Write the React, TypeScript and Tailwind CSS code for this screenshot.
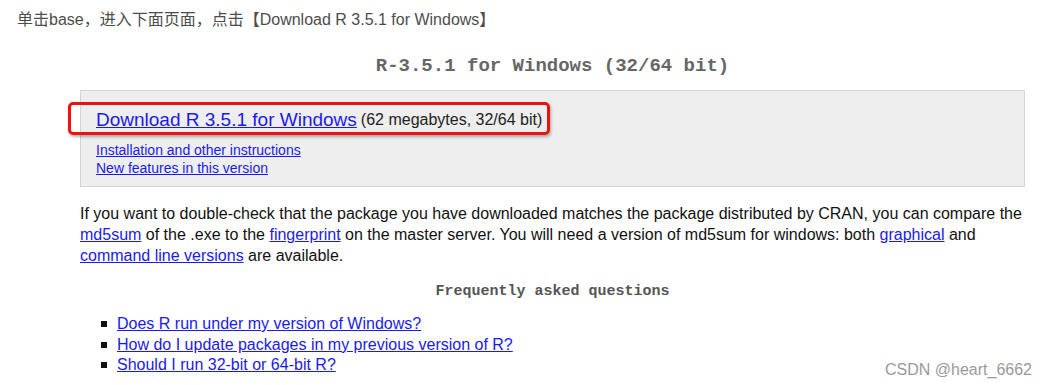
export default function App() {
  const faqs = [
    "Does R run under my version of Windows?",
    "How do I update packages in my previous version of R?",
    "Should I run 32-bit or 64-bit R?",
  ];

  return (
    <div className="relative w-[1044px] h-[385px] overflow-hidden bg-white font-['Liberation_Sans','Noto_Sans_CJK_SC',sans-serif]">
      <p className="pl-[17px] pt-[9px] text-[16px] leading-[22px] text-[#4d4d4d]">
        单击base，进入下面页面，点击【Download R 3.5.1 for Windows】
      </p>

      <div className="ml-[80px] w-[945px]">
        <h2 className="mt-[23px] text-center font-['Liberation_Mono',monospace] font-bold text-[19px] leading-[24px] text-[#666]">
          R-3.5.1 for Windows (32/64 bit)
        </h2>

        <div className="mt-[12px] h-[97px] border border-[#d4d4d4] bg-[#eeeeee] pl-[15px] pt-[11px]">
          <div className="-ml-[28px] inline-flex h-[33px] w-[482px] items-center rounded-[5px] border-[3px] border-[#ee1111] pl-[25px] pt-[3px] shadow-[1px_2px_3px_rgba(0,0,0,0.3)]">
            <a className="text-[19px] text-[#1a1aee] underline">
              Download R 3.5.1 for Windows
            </a>
            <span className="ml-[4px] text-[16px] text-[#222]">
              (62 megabytes, 32/64 bit)
            </span>
          </div>
          <div className="mt-[6px] flex flex-col text-[14px] leading-[18px] text-[#1a1aee]">
            <a className="underline">Installation and other instructions</a>
            <a className="underline">New features in this version</a>
          </div>
        </div>

        <p className="mt-[16px] text-[16px] leading-[21px] text-[#111]">
          If you want to double-check that the package you have downloaded
          matches the package distributed by CRAN, you can compare the
          <br />
          <a className="text-[#1a1aee] underline">md5sum</a> of the .exe to
          the <a className="text-[#1a1aee] underline">fingerprint</a> on the
          master server. You will need a version of md5sum for windows: both{" "}
          <a className="text-[#1a1aee] underline">graphical</a> and
          <br />
          <a className="text-[#1a1aee] underline">command line versions</a> are
          available.
        </p>

        <h3 className="mt-[16px] text-center font-['Liberation_Mono',monospace] font-bold text-[15px] leading-[20px] text-[#555]">
          Frequently asked questions
        </h3>

        <ul className="mt-[12px] pl-[21px] text-[16px] leading-[20.5px]">
          {faqs.map((q) => (
            <li key={q} className="flex items-center">
              <span className="mr-[10px] h-[6px] w-[6px] bg-[#111]" />
              <a className="text-[#1a1aee] underline">{q}</a>
            </li>
          ))}
        </ul>
      </div>

      <span className="absolute left-[885px] top-[358px] text-[16px] text-[#9a9a9a]">
        CSDN @heart_6662
      </span>
    </div>
  );
}
